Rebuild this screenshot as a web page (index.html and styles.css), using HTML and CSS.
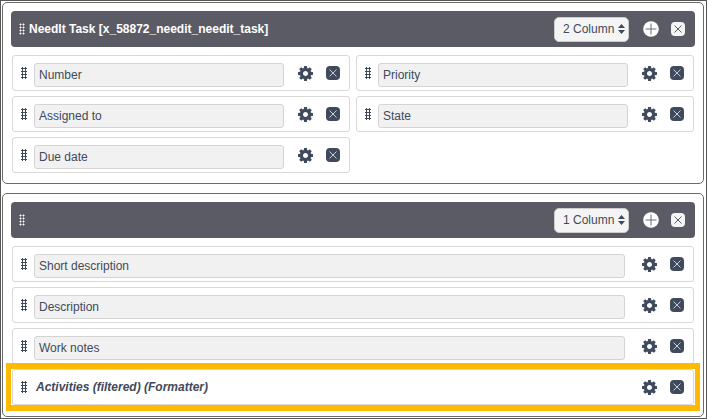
FILE: index.html
```html
<!DOCTYPE html>
<html lang="en">
<head>
    <meta charset="UTF-8">
    <title>Form Layout</title>
    <link rel="stylesheet" href="styles.css">
</head>
<body>
    <svg class="defs" width="0" height="0">
        <symbol id="cog" viewBox="0 -128 1536 1536">
            <path d="M1024 640q0-106-75-181t-181-75-181 75-75 181 75 181 181 75 181-75 75-181zm512-109v222q0 12-8 23t-20 13l-185 28q-19 54-39 91 35 50 107 138 10 12 10 25t-9 23q-27 37-99 108t-94 71q-12 0-26-9l-138-108q-44 23-91 38-16 136-29 186-7 28-36 28h-222q-14 0-24.5-8.5t-11.5-21.5l-28-184q-49-16-90-37l-141 107q-10 9-25 9-14 0-25-11-126-114-165-168-7-10-7-23 0-12 8-23 15-21 51-66.5t54-70.5q-27-50-41-99l-183-27q-13-2-21-12.5t-8-23.5v-222q0-12 8-23t19-13l186-28q14-46 39-92-40-57-107-138-10-12-10-24 0-10 9-23 26-36 98.5-107.5t94.5-71.5q13 0 26 10l138 107q44-23 91-38 16-136 29-186 7-28 36-28h222q14 0 24.5 8.5t11.5 21.5l28 184q49 16 90 37l142-107q9-9 24-9 13 0 25 10 129 119 165 170 7 8 7 22 0 12-8 23-15 21-51 66.5t-54 70.5q26 50 41 98l183 28q13 2 21 12.5t8 23.5z"/>
        </symbol>
        <symbol id="cross" viewBox="0 0 14 14">
            <path d="M3.5 3.5l7 7M10.5 3.5l-7 7" fill="none" stroke="currentColor" stroke-width="1"/>
        </symbol>
        <symbol id="plus" viewBox="0 0 16 16">
            <circle cx="8" cy="8" r="7.8" fill="#fff"/>
            <path d="M8 2.5v11M2.5 8h11" fill="none" stroke="#6b6b74" stroke-width="1"/>
        </symbol>
        <symbol id="updown" viewBox="0 0 7 10">
            <path d="M3.5 0L7 4H0zM0 6h7L3.5 10z"/>
        </symbol>
    </svg>

    <div class="page">
        <!-- First section, two columns -->
        <section class="section">
            <div class="sectionHead">
                <span class="grip"></span>
                <span class="sectionTitle">NeedIt Task [x_58872_needit_needit_task]</span>
                <div class="columnSelect">2 Column<svg class="arrows"><use href="#updown"/></svg></div>
                <svg class="addBtn"><use href="#plus"/></svg>
                <button class="removeBtn light"><svg><use href="#cross"/></svg></button>
            </div>
            <div class="fields twoCol">
                <div class="field">
                    <span class="grip dark"></span>
                    <div class="fieldName">Number</div>
                    <svg class="cog"><use href="#cog"/></svg>
                    <button class="removeBtn"><svg><use href="#cross"/></svg></button>
                </div>
                <div class="field">
                    <span class="grip dark"></span>
                    <div class="fieldName">Priority</div>
                    <svg class="cog"><use href="#cog"/></svg>
                    <button class="removeBtn"><svg><use href="#cross"/></svg></button>
                </div>
                <div class="field">
                    <span class="grip dark"></span>
                    <div class="fieldName">Assigned to</div>
                    <svg class="cog"><use href="#cog"/></svg>
                    <button class="removeBtn"><svg><use href="#cross"/></svg></button>
                </div>
                <div class="field">
                    <span class="grip dark"></span>
                    <div class="fieldName">State</div>
                    <svg class="cog"><use href="#cog"/></svg>
                    <button class="removeBtn"><svg><use href="#cross"/></svg></button>
                </div>
                <div class="field">
                    <span class="grip dark"></span>
                    <div class="fieldName">Due date</div>
                    <svg class="cog"><use href="#cog"/></svg>
                    <button class="removeBtn"><svg><use href="#cross"/></svg></button>
                </div>
            </div>
        </section>

        <!-- Second section, one column -->
        <section class="section">
            <div class="sectionHead">
                <span class="grip"></span>
                <span class="sectionTitle"></span>
                <div class="columnSelect">1 Column<svg class="arrows"><use href="#updown"/></svg></div>
                <svg class="addBtn"><use href="#plus"/></svg>
                <button class="removeBtn light"><svg><use href="#cross"/></svg></button>
            </div>
            <div class="fields oneCol">
                <div class="field">
                    <span class="grip dark"></span>
                    <div class="fieldName">Short description</div>
                    <svg class="cog"><use href="#cog"/></svg>
                    <button class="removeBtn"><svg><use href="#cross"/></svg></button>
                </div>
                <div class="field">
                    <span class="grip dark"></span>
                    <div class="fieldName">Description</div>
                    <svg class="cog"><use href="#cog"/></svg>
                    <button class="removeBtn"><svg><use href="#cross"/></svg></button>
                </div>
                <div class="field">
                    <span class="grip dark"></span>
                    <div class="fieldName">Work notes</div>
                    <svg class="cog"><use href="#cog"/></svg>
                    <button class="removeBtn"><svg><use href="#cross"/></svg></button>
                </div>
                <div class="field highlighted">
                    <span class="grip dark"></span>
                    <div class="fieldName formatter">Activities (filtered) (Formatter)</div>
                    <svg class="cog"><use href="#cog"/></svg>
                    <button class="removeBtn"><svg><use href="#cross"/></svg></button>
                </div>
            </div>
        </section>
    </div>
</body>
</html>
```

FILE: styles.css
```css
* {
    box-sizing: border-box;
    margin: 0;
    padding: 0;
}

body {
    background: #fff;
    font-family: "Liberation Sans", Arial, sans-serif;
    font-size: 12px;
    color: #3f4a5a;
}

.defs {
    display: block;
    height: 0;
}

.page {
    width: 707px;
    height: 419px;
    padding: 1px 2px 0 1px;
    border: 1px solid #555;
    display: flex;
    flex-direction: column;
    gap: 9px;
}

.section {
    border: 1px solid #6b6b6b;
    border-radius: 5px;
    padding: 8px;
    height: 182px;
}

.section + .section {
    height: 224px;
}

.sectionHead {
    height: 36px;
    background: #5b5b65;
    border-radius: 4px;
    display: flex;
    align-items: center;
    padding: 0 10px 0 8px;
    color: #fff;
}

.sectionTitle {
    flex: 1;
    margin-left: 4px;
    font-weight: bold;
}

.columnSelect {
    width: 75px;
    height: 25px;
    background: #f4f4f4;
    border: 1px solid #ccc;
    border-radius: 5px;
    color: #3f4a5a;
    display: flex;
    align-items: center;
    justify-content: space-between;
    padding: 0 3px 0 8px;
    margin-right: 14px;
}

.arrows {
    width: 7px;
    height: 10px;
    fill: #3f4a5a;
}

.addBtn {
    width: 16px;
    height: 16px;
    margin-right: 12px;
}

.removeBtn {
    width: 14px;
    height: 14px;
    border: none;
    border-radius: 4px;
    background: #3f4a5c;
    color: #c9ced6;
    display: block;
    flex: none;
}

.removeBtn svg {
    display: block;
    width: 14px;
    height: 14px;
}

.removeBtn.light {
    background: #f4f4f4;
    color: #5b5b65;
}

.grip {
    width: 6px;
    height: 12px;
    flex: none;
    background: radial-gradient(circle, #fff 0.9px, transparent 1.1px) 0 0 / 3px 3px;
}

.grip.dark {
    background-image: radial-gradient(circle, #3f4a5a 1px, transparent 1.2px);
    align-self: flex-start;
    margin-top: 11px;
}

.fields {
    margin: 8px 1px 0;
    display: grid;
    grid-template-columns: 1fr;
    gap: 5px;
}

.fields.twoCol {
    grid-template-columns: 338px 338px;
    gap: 5px 6px;
}

.field {
    height: 36px;
    border: 1px solid #d9d9d9;
    border-radius: 3px;
    background: #fff;
    display: flex;
    align-items: center;
    padding: 0 9px 0 8px;
}

.fieldName {
    flex: 1;
    height: 24px;
    line-height: 22px;
    margin: 4px 14px 0 7px;
    padding: 0 4px;
    background: #f1f1f1;
    border: 1px solid #d4d4d4;
    border-radius: 3px;
}

.oneCol .fieldName {
    margin-right: 17px;
}

.oneCol .fieldName.formatter {
    margin-top: 0;
    background: transparent;
    border-color: transparent;
    font-weight: bold;
    font-style: italic;
    padding: 0 1px;
}

.cog {
    width: 15px;
    height: 15px;
    fill: #3f4a5c;
    margin: 1px 13px 0 0;
    flex: none;
}

.highlighted {
    position: relative;
}

.highlighted::after {
    content: '';
    position: absolute;
    inset: -7px;
    border: solid #ffb900;
    border-width: 6px 5px;
    pointer-events: none;
}
```
